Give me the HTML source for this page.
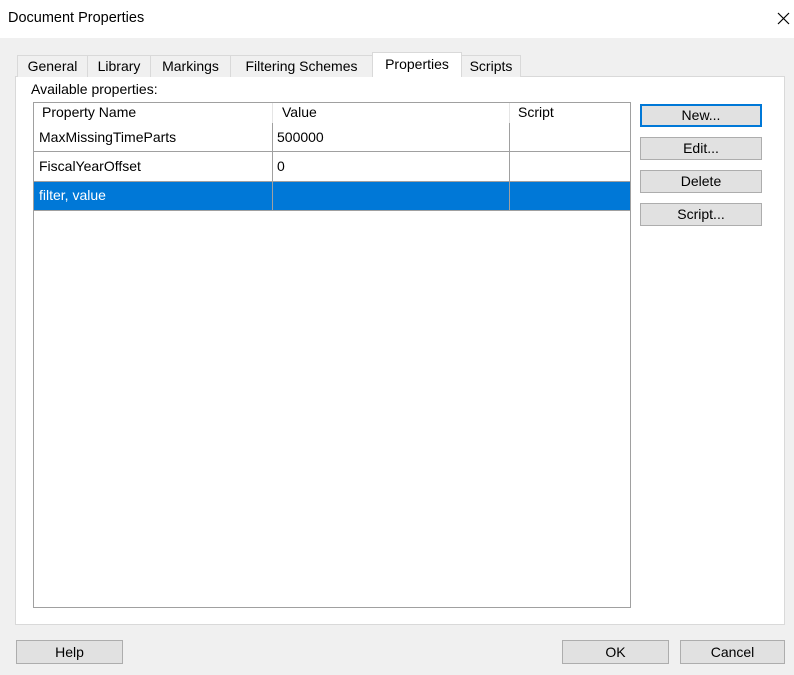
<!DOCTYPE html>
<html><head><style>
*{margin:0;padding:0;box-sizing:border-box}
body{width:794px;height:675px;background:#f0f0f0;font-family:"Liberation Sans","Noto Sans CJK KR",sans-serif;font-size:14px;color:#000;position:relative;overflow:hidden}
.a{position:absolute;white-space:nowrap}
.title{left:0;top:0;width:794px;height:38px;background:#fff}
.tab{position:absolute;top:55px;height:22px;border:1px solid #d9d9d9;border-bottom:none;background:#f0f0f0;text-align:center;line-height:21px;font-size:14px}
.sel{top:52px;height:25px;background:#fff;z-index:2;line-height:22px}
.panel{left:15px;top:76px;width:770px;height:549px;background:#fff;border:1px solid #d9d9d9}
.btn{position:absolute;background:#e1e1e1;border:1px solid #adadad;text-align:center;font-size:14px}
.cell{position:absolute;padding-left:5px;line-height:28px}
</style></head><body>
<div class="a title"></div>
<div class="a" style="left:8px;top:10px;font-size:14.5px">Document Properties</div>
<svg class="a" style="left:777px;top:12px" width="13" height="13"><path d="M1 1L12 12M12 1L1 12" stroke="#000" stroke-width="1.2"/></svg>
<div class="a panel"></div>
<div class="tab" style="left:17px;width:71px">General</div>
<div class="tab" style="left:87px;width:64px">Library</div>
<div class="tab" style="left:150px;width:81px">Markings</div>
<div class="tab" style="left:230px;width:143px">Filtering Schemes</div>
<div class="tab sel" style="left:372px;width:90px">Properties</div>
<div class="tab" style="left:461px;width:60px">Scripts</div>
<div class="a" style="left:31px;top:81px">Available properties:</div>
<div class="a" style="left:33px;top:102px;width:598px;height:506px;border:1px solid #a0a0a0;background:#fff">
 <div class="a" style="left:8px;top:1px">Property Name</div>
 <div class="a" style="left:248px;top:1px">Value</div>
 <div class="a" style="left:484px;top:1px">Script</div>
 <div class="a" style="left:238px;top:0;width:1px;height:20px;background:#e5e5e5"></div>
 <div class="a" style="left:475px;top:0;width:1px;height:20px;background:#e5e5e5"></div>
 <div class="a" style="left:0;top:20px;width:596px;height:88px">
  <div class="a" style="left:0;top:0;width:596px;height:29px;border-bottom:1px solid #a0a0a0"></div>
  <div class="a" style="left:0;top:29px;width:596px;height:30px;border-bottom:1px solid #a0a0a0"></div>
  <div class="a" style="left:0;top:59px;width:596px;height:29px;background:#0078d7;border-bottom:1px solid #a0a0a0"></div>
  <div class="a" style="left:238px;top:0;width:1px;height:88px;background:#a0a0a0"></div>
  <div class="a" style="left:475px;top:0;width:1px;height:88px;background:#a0a0a0"></div>
  <div class="cell" style="left:0;top:0">MaxMissingTimeParts</div>
  <div class="cell" style="left:238px;top:0">500000</div>
  <div class="cell" style="left:0;top:29px">FiscalYearOffset</div>
  <div class="cell" style="left:238px;top:29px">0</div>
  <div class="cell" style="left:0;top:58px;color:#fff">filter, value</div>
 </div>
</div>
<div class="btn" style="left:640px;top:104px;width:122px;height:23px;border:2px solid #0078d7;line-height:19px">New...</div>
<div class="btn" style="left:640px;top:137px;width:122px;height:23px;line-height:21px">Edit...</div>
<div class="btn" style="left:640px;top:170px;width:122px;height:23px;line-height:21px">Delete</div>
<div class="btn" style="left:640px;top:203px;width:122px;height:23px;line-height:21px">Script...</div>
<div class="btn" style="left:16px;top:640px;width:107px;height:24px;line-height:22px">Help</div>
<div class="btn" style="left:562px;top:640px;width:107px;height:24px;line-height:22px">OK</div>
<div class="btn" style="left:680px;top:640px;width:105px;height:24px;line-height:22px">Cancel</div>
</body></html>
